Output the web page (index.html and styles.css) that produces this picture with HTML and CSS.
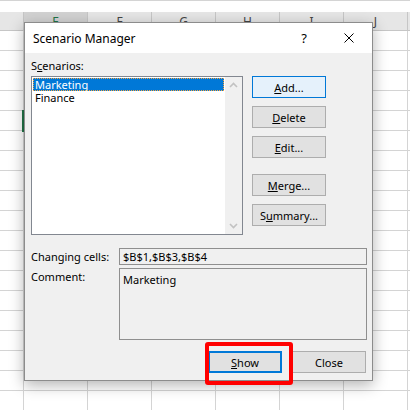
FILE: index.html
```html
<!DOCTYPE html>
<html lang="en">
<head>
    <meta charset="UTF-8">
    <meta name="viewport" content="width=device-width, initial-scale=1.0">
    <title>Scenario Manager</title>
    <link rel="stylesheet" href="styles.css">
</head>
<body>
    <div class="sheet">
        <div class="topbar"></div>
        <div class="col-heads">
            <div class="col-head partial"></div>
            <div class="col-head selected">E</div>
            <div class="col-head">F</div>
            <div class="col-head">G</div>
            <div class="col-head">H</div>
            <div class="col-head">I</div>
            <div class="col-head">J</div>
        </div>
        <div class="cells">
            <div class="active-cell"></div>
        </div>
    </div>

    <div class="dialog">
        <div class="titlebar">
            <span class="title">Scenario Manager</span>
            <span class="help">?</span>
            <span class="close-x">
                <svg width="10" height="10" viewBox="0 0 10 10"><path d="M0.5 0.5 L9.5 9.5 M9.5 0.5 L0.5 9.5" stroke="#000" stroke-width="1"/></svg>
            </span>
        </div>
        <div class="dialog-body">
            <div class="label">S<u>c</u>enarios:</div>
            <div class="scenario-row">
                <div class="listbox">
                    <div class="list-items">
                        <div class="item selected">Marketing</div>
                        <div class="item">Finance</div>
                    </div>
                    <div class="scrollbar">
                        <svg width="17" height="17" viewBox="0 0 17 17"><path d="M5 10 L8.5 6.5 L12 10" fill="none" stroke="#c2c2c2" stroke-width="1.6"/></svg>
                        <svg width="17" height="17" viewBox="0 0 17 17"><path d="M5 7 L8.5 10.5 L12 7" fill="none" stroke="#c2c2c2" stroke-width="1.6"/></svg>
                    </div>
                </div>
                <div class="side-buttons">
                    <button class="btn hot"><u>A</u>dd...</button>
                    <button class="btn"><u>D</u>elete</button>
                    <button class="btn"><u>E</u>dit...</button>
                    <button class="btn gap-above"><u>M</u>erge...</button>
                    <button class="btn">S<u>u</u>mmary...</button>
                </div>
            </div>
            <div class="field-row cells-row">
                <span class="field-label">Changing cells:</span>
                <div class="field">$B$1,$B$3,$B$4</div>
            </div>
            <div class="field-row">
                <span class="field-label">Comment:</span>
                <div class="field comment">Marketing</div>
            </div>
            <div class="footer">
                <button class="btn focused"><u>S</u>how</button>
                <button class="btn">Close</button>
            </div>
        </div>
    </div>

    <div class="highlight"></div>
</body>
</html>
```

FILE: styles.css
```css
body {
    margin: 0;
    width: 410px;
    height: 410px;
    overflow: hidden;
    background: #fff;
    font-family: "Noto Sans", sans-serif;
    font-size: 11px;
    color: #000;
}
.sheet {
    width: 410px;
    height: 410px;
}
.topbar {
    height: 11px;
    border-top: 1px solid #d4d4d4;
    background: #fff;
}
.col-heads {
    display: flex;
    height: 18px;
    background: #e6e6e6;
    border-bottom: 1px solid #c6c6c6;
}
.col-head {
    width: 63px;
    flex-shrink: 0;
    border-right: 1px solid #c6c6c6;
    text-align: center;
    font-size: 12px;
    line-height: 20px;
    color: #444;
}
.col-head.partial {
    width: 23px;
}
.col-head.selected {
    background: #d2d2d2;
    color: #217346;
    box-shadow: inset 0 -2px 0 #217346;
}
.cells {
    position: relative;
    height: 380px;
    background-image:
        linear-gradient(to right, transparent 63px, #d4d4d4 63px),
        linear-gradient(to bottom, transparent 19px, #d4d4d4 19px);
    background-size: 64px 20px, 64px 20px;
    background-position: 24px 0, 0 0;
}
.active-cell {
    position: absolute;
    left: 22px;
    top: 79px;
    width: 62px;
    height: 18px;
    border: 2px solid #217346;
}

/* dialog */
.dialog {
    position: absolute;
    left: 24px;
    top: 22px;
    width: 349px;
    height: 359px;
    box-sizing: border-box;
    border: 1px solid #8c8c8c;
    background: #f0f0f0;
    box-shadow: 0 4px 14px rgba(0, 0, 0, 0.3);
}
.titlebar {
    display: flex;
    align-items: center;
    height: 30px;
    background: #fff;
    padding-left: 8px;
    font-size: 12px;
}
.title {
    flex: 1;
}
.help {
    width: 30px;
    text-align: center;
    font-size: 13px;
}
.close-x {
    width: 46px;
    margin-left: 7px;
    display: flex;
    justify-content: center;
}
.dialog-body {
    padding: 6px 5px 0 6px;
}
.label {
    line-height: 14px;
    margin-bottom: 3px;
}
.scenario-row {
    display: flex;
    gap: 9px;
}
.listbox {
    width: 212px;
    height: 159px;
    box-sizing: border-box;
    border: 1px solid #828790;
    background: #fff;
    display: flex;
}
.list-items {
    flex: 1;
    padding: 1px;
}
.item {
    height: 13px;
    line-height: 13px;
    padding-left: 2px;
    overflow: hidden;
}
.item.selected {
    background: #0078d7;
    color: #fff;
    outline: 1px dotted #f7a440;
    outline-offset: -1px;
}
.scrollbar {
    width: 17px;
    background: #f0f0f0;
    display: flex;
    flex-direction: column;
    justify-content: space-between;
}
.side-buttons {
    display: flex;
    flex-direction: column;
    gap: 8px;
}
.btn {
    width: 74px;
    height: 22px;
    box-sizing: border-box;
    margin: 0;
    padding: 0;
    border: 1px solid #adadad;
    background: #e1e1e1;
    font-family: "Noto Sans", sans-serif;
    font-size: 11px;
    color: #000;
}
.btn.hot {
    background: #e5f1fb;
    border-color: #0078d7;
}
.btn.focused {
    border: 2px solid #0078d7;
}
.btn.gap-above {
    margin-top: 8px;
}
.field-row {
    display: flex;
    margin-top: 3px;
}
.field-row.cells-row {
    margin-top: 13px;
}
.field-label {
    width: 88px;
    line-height: 17px;
}
.field {
    flex: 1;
    height: 17px;
    box-sizing: border-box;
    border: 1px solid #8f8f8f;
    padding-left: 3px;
    line-height: 15px;
}
.field.comment {
    height: 72px;
    padding-top: 3px;
}
.footer {
    display: flex;
    justify-content: flex-end;
    gap: 10px;
    margin-top: 11px;
    padding-right: 1px;
}
.highlight {
    position: absolute;
    left: 205px;
    top: 342px;
    width: 80px;
    height: 35px;
    border: 4px solid #ff0000;
    border-radius: 3px;
}
```
